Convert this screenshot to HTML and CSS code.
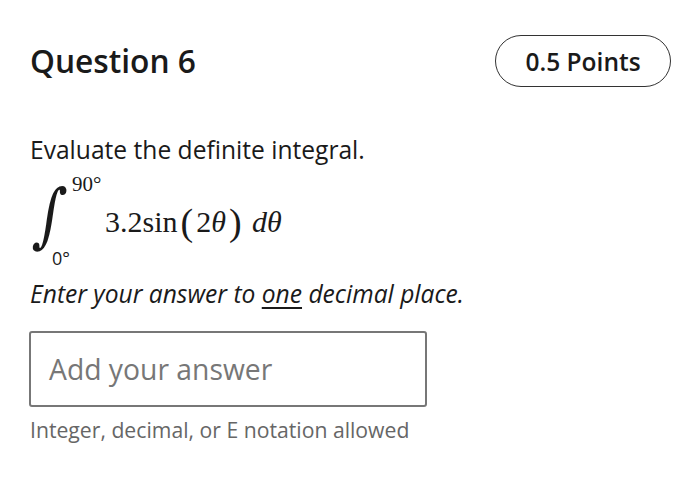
FILE: index.html
```html
<!DOCTYPE html>
<html>
<head>
<meta charset="utf-8">
<link rel="stylesheet" href="styles.css">
</head>
<body>
<div class="page">
  <div class="header">
    <h1 class="title">Question 6</h1>
    <div class="points">0.5 Points</div>
  </div>
  <p class="prompt">Evaluate the definite integral.</p>
  <div class="integral">
    <span class="int-sign">∫</span>
    <span class="upper">90°</span>
    <span class="lower">0°</span>
    <span class="expr">3.2sin<span class="paren">(</span>2<i>θ</i><span class="paren">)</span> <i>dθ</i></span>
  </div>
  <p class="instr">Enter your answer to <u>one</u> decimal place.</p>
  <div class="answer">Add your answer</div>
  <p class="help">Integer, decimal, or E notation allowed</p>
</div>
</body>
</html>
```
FILE: styles.css
```css
html, body { margin: 0; padding: 0; background: #fff; }
body { font-family: "Open Sans", "Noto Sans", sans-serif; color: #1a1a1a; }
.page { padding: 34px 30px 0 30px; width: 640px; }
.header { display: flex; justify-content: space-between; align-items: center; }
.title { margin: 0; font-size: 31.7px; font-weight: 600; letter-spacing: 0; }
.points { border: 1.5px solid #333; border-radius: 27px; height: 52px; width: 176px; box-sizing: border-box; display: flex; align-items: center; justify-content: center; font-size: 24.5px; font-weight: 600; margin-right: -1px; margin-top: 1px; }
.prompt { margin: 46px 0 0 0; font-size: 24.6px; line-height: 34px; }
.integral { position: relative; height: 100px; margin-top: 4px; }
.int-sign { position: absolute; left: 1px; top: 9px; font-family: "DejaVu Serif", serif; font-size: 70px; line-height: 1; transform: scaleX(0.8) skewX(-9deg); transform-origin: left bottom; }
.upper { position: absolute; left: 42px; top: 1px; font-family: "Liberation Serif", serif; font-size: 21px; line-height: 24px; }
.lower { position: absolute; left: 22px; top: 75px; font-size: 18px; line-height: 24px; }
.expr { position: absolute; left: 75px; top: 34px; font-family: "Liberation Serif", serif; font-size: 30px; line-height: 34px; white-space: nowrap; }
.expr i { font-style: italic; }
.paren { font-size: 38px; line-height: 0; vertical-align: -3px; padding: 0 3px; }
.instr { margin: 6px 0 0 0; font-style: italic; font-size: 24.6px; line-height: 34px; }
.instr u { text-underline-offset: 4px; text-decoration-thickness: 1.5px; }
.answer { margin-top: 20px; width: 398px; height: 76px; box-sizing: border-box; border: 2px solid #777; border-radius: 3px; padding-left: 18px; display: flex; align-items: center; font-size: 28.3px; color: #777; margin-left: -1px; }
.help { margin: 8px 0 0 0; font-size: 21.2px; color: #666; line-height: 30px; }
```
